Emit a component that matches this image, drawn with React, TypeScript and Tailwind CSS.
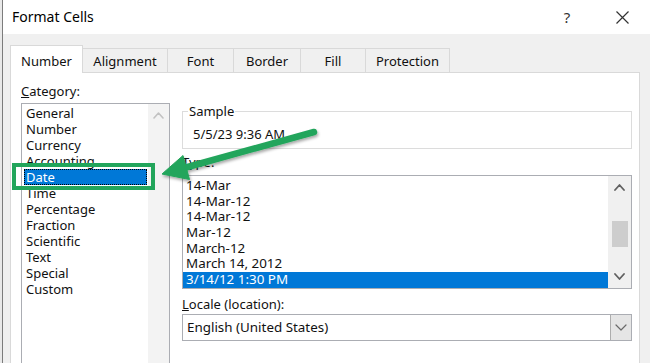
import React from "react";

function Chevron({ dir, color, w = 9, h = 5, sw = 1.6 }: { dir: "up" | "down"; color: string; w?: number; h?: number; sw?: number }) {
  const W = w + 2;
  const H = h + 2;
  const pts = dir === "up" ? `1,${h + 1} ${W / 2},1 ${w + 1},${h + 1}` : `1,1 ${W / 2},${h + 1} ${w + 1},1`;
  return (
    <svg width={W} height={H} viewBox={`0 0 ${W} ${H}`}>
      <polyline points={pts} fill="none" stroke={color} strokeWidth={sw} strokeLinecap="round" strokeLinejoin="round" />
    </svg>
  );
}

export default function App() {
  const categories = ["General", "Number", "Currency", "Accounting", "Date", "Time", "Percentage", "Fraction", "Scientific", "Text", "Special", "Custom"];
  const types = ["14-Mar", "14-Mar-12", "14-Mar-12", "Mar-12", "March-12", "March 14, 2012", "3/14/12 1:30 PM"];
  const tabs = [
    { label: "Number", w: "w-[73px]" },
    { label: "Alignment", w: "w-[85px]" },
    { label: "Font", w: "w-[66px]" },
    { label: "Border", w: "w-[67px]" },
    { label: "Fill", w: "w-[65px]" },
    { label: "Protection", w: "w-[84px]" },
  ];
  return (
    <div className="relative w-[650px] h-[363px] overflow-hidden flex bg-white font-['Noto_Sans',sans-serif] text-[13px] text-[#111]">
      {/* left edge (sheet behind) */}
      <div className="w-[2px] bg-[#e9e9e9]" />
      <div className="w-[1px] bg-[#7c7c7c]" />

      {/* dialog */}
      <div className="flex-1 flex flex-col">
        {/* title bar */}
        <div className="h-[34px] shrink-0 bg-white flex items-center">
          <span className="pl-[9px] text-[14px] leading-[20px] text-black">Format Cells</span>
          <div className="flex-1" />
          <span className="w-[14px] text-center text-[15px] leading-[20px] text-[#333]">?</span>
          <svg className="ml-[42px] mr-[21px]" width="13" height="13" viewBox="0 0 13 13">
            <path d="M0.5 0.5 L12.5 12.5 M12.5 0.5 L0.5 12.5" stroke="#333" strokeWidth="1.2" />
          </svg>
        </div>

        {/* body */}
        <div className="flex-1 bg-[#f0f0f0] pl-[7px] pr-[10px] pt-[11px] flex flex-col">
          {/* tabs */}
          <div className="h-[27px] shrink-0 flex items-end">
            {tabs.map((t, i) =>
              i === 0 ? (
                <div key={t.label} className={`${t.w} relative z-10 h-[28px] -mb-[1px] bg-white border-l border-t border-r border-[#d9d9d9] flex items-center justify-center pt-[3px] leading-[18px]`}>
                  {t.label}
                </div>
              ) : (
                <div key={t.label} className={`${t.w} h-[24px] bg-[#f0f0f0] border-t border-r border-[#d9d9d9] flex items-center justify-center leading-[18px]`}>
                  {t.label}
                </div>
              )
            )}
          </div>

          {/* panel */}
          <div className="h-[320px] shrink-0 bg-white border border-[#d9d9d9] flex gap-[12px] pt-[9px] pl-[10px] pr-[7px]">
            {/* left column */}
            <div className="w-[149px] shrink-0 flex flex-col">
              <div className="leading-[19px]">
                <span className="underline">C</span>ategory:
              </div>
              <div className="mt-[2px] h-[280px] border border-[#abadb3] flex">
                <div className="flex-1 pt-[1px] pl-[2px] pr-[1px]">
                  {categories.map((c) =>
                    c === "Date" ? (
                      <div key={c} className="h-[16px] leading-[16px] pl-[2px] bg-[#0078d7] text-white outline-1 outline-dotted outline-black -outline-offset-1">
                        {c}
                      </div>
                    ) : (
                      <div key={c} className="h-[16px] leading-[16px] pl-[2px]">
                        {c}
                      </div>
                    )
                  )}
                </div>
                <div className="w-[21px] bg-[#f3f3f3] flex flex-col items-center">
                  <div className="h-[22px] flex items-center justify-center">
                    <Chevron dir="up" color="#c2c2c2" />
                  </div>
                </div>
              </div>
            </div>

            {/* right column */}
            <div className="flex-1 flex flex-col">
              <div className="relative mt-[29px] h-[38px] border border-[#dcdcdc] px-[10px] pt-[13px] leading-[19px]">
                <span className="absolute -top-[10px] left-[5px] bg-white px-[1px] leading-[19px]">Sample</span>
                5/5/23 9:36 AM
              </div>

              <div className="mt-[4px] leading-[18px]">
                <span className="underline">T</span>ype:
              </div>
              <div className="mt-[4px] h-[114px] border border-[#abadb3] flex">
                <div className="flex-1 pt-[2px] overflow-hidden text-[13.4px]">
                  {types.map((t, i) =>
                    i === types.length - 1 ? (
                      <div key={i} className="h-[15.67px] leading-[15.67px] pl-[3px] bg-[#0078d7] text-white">
                        {t}
                      </div>
                    ) : (
                      <div key={i} className="h-[15.67px] leading-[15.67px] pl-[3px]">
                        {t}
                      </div>
                    )
                  )}
                </div>
                <div className="w-[23px] bg-[#f0f0f0] flex flex-col items-center">
                  <div className="h-[23px] w-full flex items-center justify-center">
                    <Chevron dir="up" color="#606060" sw={1.8} />
                  </div>
                  <div className="mt-[22px] w-[16px] h-[26px] bg-[#cdcdcd]" />
                  <div className="mt-auto h-[23px] w-full flex items-center justify-center">
                    <Chevron dir="down" color="#606060" sw={1.8} />
                  </div>
                </div>
              </div>

              <div className="mt-[6px] leading-[18px]">
                <span className="underline">L</span>ocale (location):
              </div>
              <div className="mt-[1px] h-[27px] border border-[#abadb3] flex items-center">
                <span className="pl-[4px] leading-[19px] text-[13.4px]">English (United States)</span>
                <div className="ml-auto self-stretch w-[21px] bg-[#e5e5e5] border-l border-[#adadad] flex items-center justify-center">
                  <Chevron dir="down" color="#6a6a6a" w={10} h={5} sw={1.2} />
                </div>
              </div>
            </div>
          </div>
        </div>
      </div>

      {/* green highlight box */}
      <div className="absolute left-[12px] top-[163px] w-[143px] h-[27px] border-[4px] border-[#22a55b]" />

      {/* green arrow */}
      <svg className="absolute left-0 top-0 pointer-events-none" width="650" height="363" viewBox="0 0 650 363">
        <defs>
          <filter id="sh" x="-20%" y="-50%" width="140%" height="200%">
            <feDropShadow dx="1" dy="2" stdDeviation="1.5" floodColor="#000" floodOpacity="0.35" />
          </filter>
        </defs>
        <g filter="url(#sh)" fill="#22a55b" stroke="#22a55b">
          <line x1="314" y1="132" x2="184" y2="168" strokeWidth="6.5" strokeLinecap="round" />
          <polygon points="162,174 189.5,179.5 183,155.5" strokeWidth="1" strokeLinejoin="round" />
        </g>
      </svg>
    </div>
  );
}
